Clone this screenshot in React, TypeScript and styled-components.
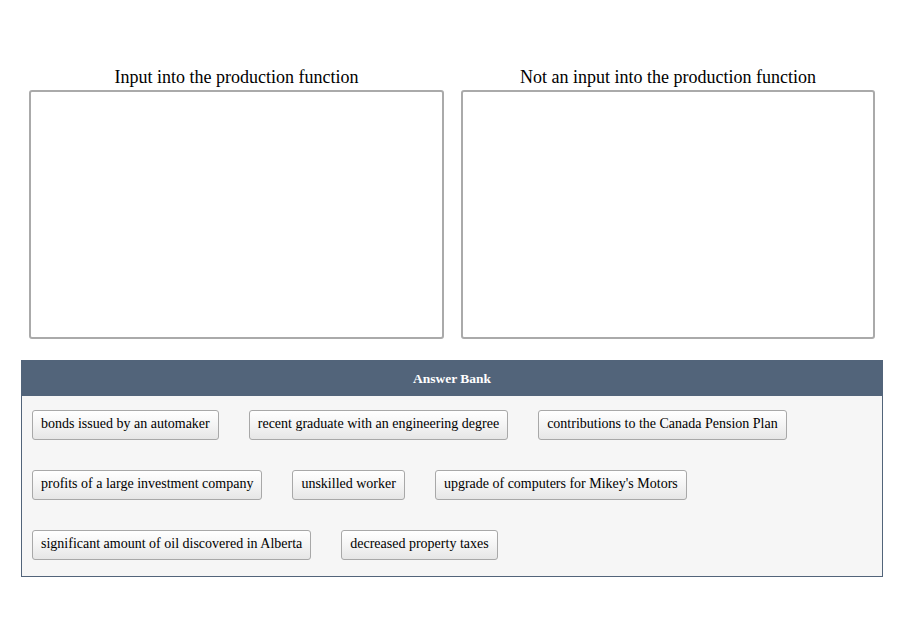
import React from "react";
import styled, { createGlobalStyle } from "styled-components";

const Global = createGlobalStyle`
  html, body { margin: 0; padding: 0; background: #fff; }
  body { font-family: "Liberation Serif", "Times New Roman", serif; color: #000; }
`;

const Page = styled.div`
  width: 916px;
  padding: 66px 0 0 21px;
  box-sizing: border-box;
`;

const Zones = styled.div`
  display: flex;
  gap: 17px;
  padding-left: 8px;
`;

const Zone = styled.div<{ $w: number }>`
  width: ${(p) => p.$w}px;
  display: flex;
  flex-direction: column;
  align-items: center;
`;

const ZoneTitle = styled.div`
  font-size: 18px;
  line-height: 22px;
  height: 24px;
`;

const DropBox = styled.div`
  width: 100%;
  height: 249px;
  box-sizing: border-box;
  border: 2px solid #aaaaaa;
  border-radius: 3px;
  background: #fff;
`;

const Bank = styled.div`
  margin-top: 21px;
  width: 862px;
  box-sizing: border-box;
  border: 1px solid #52647a;
  background: #f6f6f6;
`;

const BankHeader = styled.div`
  background: #52647a;
  color: #fff;
  font-weight: bold;
  font-size: 13.5px;
  height: 35px;
  line-height: 35px;
  text-align: center;
`;

const Chips = styled.div`
  display: flex;
  flex-direction: column;
  row-gap: 30px;
  padding: 14px 10px 16px 10px;
`;

const Row = styled.div`
  display: flex;
  gap: 30px;
`;

const Chip = styled.div`
  height: 30px;
  box-sizing: border-box;
  padding: 0 8px;
  border: 1px solid #a8a8a8;
  border-radius: 3px;
  background: linear-gradient(to bottom, #ffffff 0%, #f4f4f4 50%, #e6e6e6 100%);
  font-size: 14px;
  line-height: 26px;
  white-space: nowrap;
`;

const rows = [
  [
    "bonds issued by an automaker",
    "recent graduate with an engineering degree",
    "contributions to the Canada Pension Plan",
  ],
  [
    "profits of a large investment company",
    "unskilled worker",
    "upgrade of computers for Mikey's Motors",
  ],
  ["significant amount of oil discovered in Alberta", "decreased property taxes"],
];

export default function App() {
  return (
    <>
      <Global />
      <Page>
        <Zones>
          <Zone $w={415}>
            <ZoneTitle>Input into the production function</ZoneTitle>
            <DropBox />
          </Zone>
          <Zone $w={414}>
            <ZoneTitle>Not an input into the production function</ZoneTitle>
            <DropBox />
          </Zone>
        </Zones>
        <Bank>
          <BankHeader>Answer Bank</BankHeader>
          <Chips>
            {rows.map((r, i) => (
              <Row key={i}>
                {r.map((t) => (
                  <Chip key={t}>{t}</Chip>
                ))}
              </Row>
            ))}
          </Chips>
        </Bank>
      </Page>
    </>
  );
}
